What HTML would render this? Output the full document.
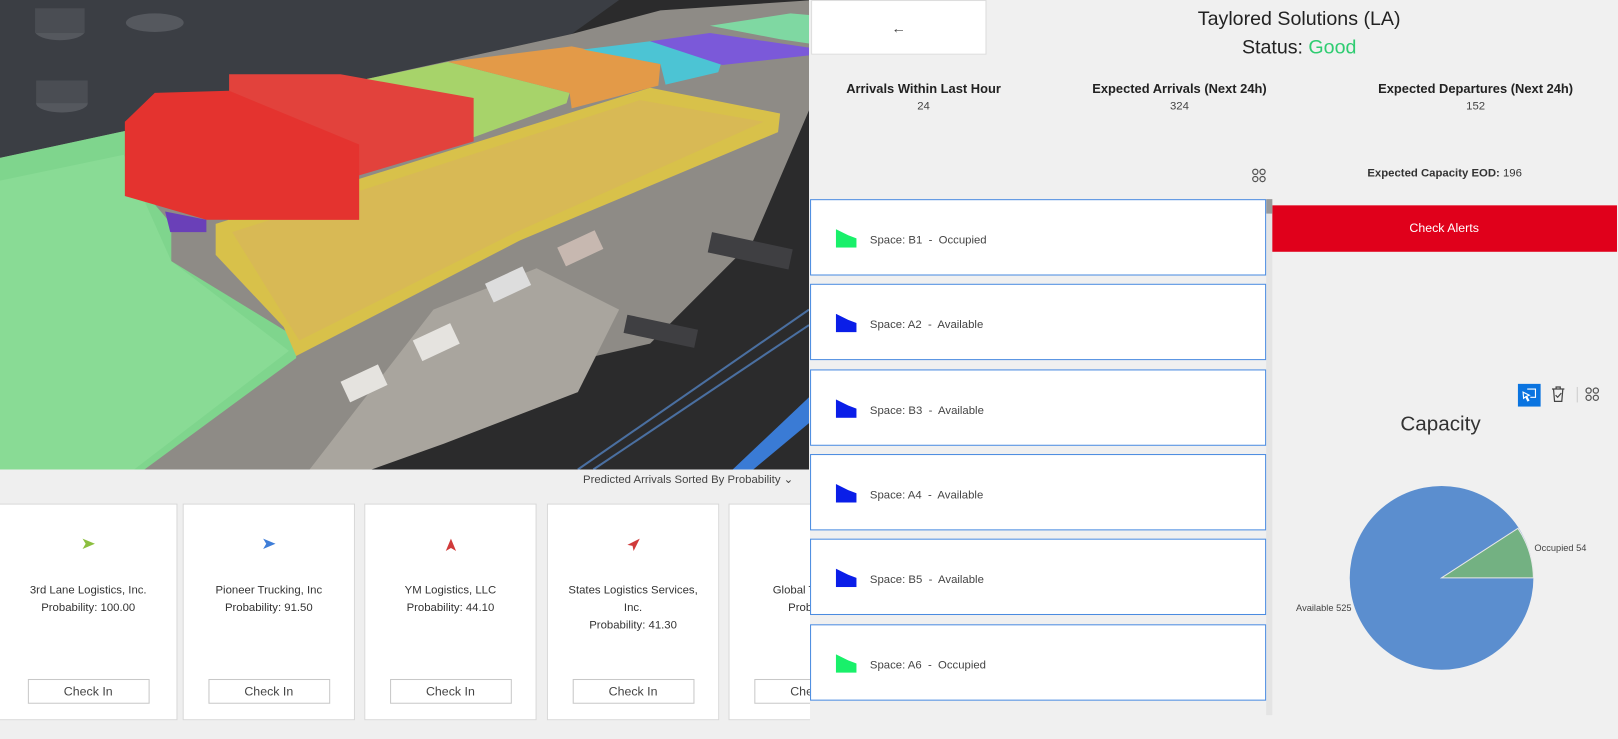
<!DOCTYPE html>
<html><head><meta charset="utf-8"><style>
*{margin:0;padding:0;box-sizing:border-box}
body{width:1618px;height:716px;overflow:hidden;background:#f0f0f0;font-family:"Liberation Sans",sans-serif;position:relative;color:#222}
#w{position:absolute;left:0;top:0;width:1568px;height:694px;transform:scale(1.0319);transform-origin:0 0}
.abs{position:absolute}
.card{position:absolute;top:488px;height:210px;background:#fff;border:1px solid #d8d8d8;text-align:center;font-size:11px;color:#333;line-height:17px}
.card .btn{position:absolute;left:50%;transform:translateX(-50%);top:169px;width:118px;height:24px;border:1px solid #c8c8c8;line-height:22px;font-size:12px;color:#444;background:#fff}
.card .ic{position:absolute;left:50%;top:32px;transform:translateX(-50%)}
.card .t{position:absolute;left:22px;right:22px;top:75px}
.sp{position:absolute;left:785px;width:442px;height:74px;background:#fff;border:1px solid #4a8be0}
.sp svg{position:absolute;left:24px;top:28px}
.sp span{position:absolute;left:57px;top:33px;font-size:11px;color:#444}
.stat{position:absolute;top:79px;text-align:center;width:260px}
.stat b{display:block;font-size:12.5px;color:#222}
.stat i{font-style:normal;font-size:11px;color:#444;display:block;margin-top:4px}
</style></head><body><div id="w">
<svg class="abs" style="left:0;top:0" width="784" height="455" viewBox="0 0 784 455" preserveAspectRatio="none">
<rect width="784" height="455" fill="#2b2b2c"/>
<polygon points="0,0 600,0 554,33 353,77 121,127 0,153" fill="#3b3e44"/>
<ellipse cx="58" cy="30" rx="24" ry="9" fill="#55585e"/><rect x="34" y="8" width="48" height="24" fill="#4a4d53"/>
<ellipse cx="150" cy="22" rx="28" ry="9" fill="#55585e"/>
<ellipse cx="60" cy="100" rx="25" ry="9" fill="#55585e"/><rect x="35" y="78" width="50" height="22" fill="#4a4d53"/>
<polygon points="0,153 121,127 353,77 554,33 640,10 790,0 790,93 730,233 630,333 480,367 353,455 0,455" fill="#8e8b86"/>
<polygon points="420,300 520,260 600,300 560,380 430,430 360,455 300,455" fill="#a9a59e"/>
<rect x="470" y="275" width="40" height="20" fill="#ddd" transform="rotate(-25 470 275)"/>
<rect x="400" y="330" width="40" height="22" fill="#e5e3df" transform="rotate(-25 400 330)"/>
<rect x="330" y="370" width="40" height="22" fill="#e5e3df" transform="rotate(-25 330 370)"/>
<rect x="540" y="240" width="40" height="20" fill="#c7b8b0" transform="rotate(-25 540 240)"/>
<polygon points="0,153 121,127 126,170 166,217 166,253 287,327 287,347 140,455 0,455" fill="#7fd58d"/>
<polygon points="0,175 120,150 166,253 280,340 130,455 0,455" fill="#8fdf9b" opacity=".6"/>
<polygon points="209,217 630,85 756,110 754,128 504,233 287,345 275,317 209,247" fill="#d8c14a"/>
<polygon points="225,225 620,97 740,118 500,225 290,330" fill="#d9b55a" opacity=".7"/>
<polygon points="353,77 434,60 552,90 549,100 459,133 454,110" fill="#a7d36a"/>
<polygon points="434,60 554,45 640,62 638,83 554,105 552,90" fill="#e39a48"/>
<polygon points="565,48 630,40 700,58 696,70 645,82 640,62" fill="#4cc4d4"/>
<polygon points="630,40 688,32 790,47 790,53 700,63" fill="#7b59d9"/>
<polygon points="688,25 766,13 790,15 790,43 756,38" fill="#7fd8a2"/>
<polygon points="222,72 330,72 459,95 459,137 348,170 348,213 222,213" fill="#e2423c"/>
<polygon points="121,118 150,90 222,88 348,140 348,213 200,213 121,190" fill="#e4332f"/>
<polygon points="160,205 200,213 200,225 165,225" fill="#6a40b8"/>
<rect x="608" y="305" width="70" height="18" fill="#3f3f42" transform="rotate(12 608 305)"/>
<rect x="690" y="225" width="80" height="20" fill="#3f3f42" transform="rotate(12 690 225)"/>
<line x1="560" y1="455" x2="784" y2="300" stroke="#4a6fa0" stroke-width="2"/>
<line x1="575" y1="455" x2="784" y2="315" stroke="#4a6fa0" stroke-width="2"/>
<polygon points="710,455 784,385 784,410 730,455" fill="#3a7bd5"/>
</svg>
<div class="abs" style="left:0;top:455px;width:785px;height:261px;background:#efefef"></div>
<div class="abs" style="left:565px;top:458px;font-size:11px;color:#444">Predicted Arrivals Sorted By Probability &#8964;</div>
<div class="card" style="left:-1px;width:173px"><svg class="ic" width="14" height="12" viewBox="0 0 14 12"><path d="M1 1L13 6L1 11L4 6Z" fill="#8cbf3f"/></svg><div class="t">3rd Lane Logistics, Inc.<br>Probability: 100.00</div><div class="btn">Check In</div></div>
<div class="card" style="left:177px;width:167px"><svg class="ic" width="14" height="12" viewBox="0 0 14 12"><path d="M1 1L13 6L1 11L4 6Z" fill="#3f7ed8"/></svg><div class="t">Pioneer Trucking, Inc<br>Probability: 91.50</div><div class="btn">Check In</div></div>
<div class="card" style="left:353px;width:167px"><svg class="ic" width="12" height="14" viewBox="0 0 12 14"><path d="M6 1L11 13L6 10L1 13Z" fill="#d03a3a"/></svg><div class="t">YM Logistics, LLC<br>Probability: 44.10</div><div class="btn">Check In</div></div>
<div class="card" style="left:530px;width:167px"><svg class="ic" width="14" height="14" viewBox="0 0 14 14"><path d="M13 1L7 13L6 8L1 7Z" fill="#d03a3a"/></svg><div class="t" style="left:14px;right:14px">States Logistics Services, Inc.<br>Probability: 41.30</div><div class="btn">Check In</div></div>
<div class="card" style="left:706px;width:167px"><div class="t">Global Transport<br>Probability</div><div class="btn">Check In</div></div>
<div class="abs" style="left:785px;top:0;width:833px;height:716px;background:#f0f0f0"></div>
<div class="abs" style="left:786px;top:0;width:170px;height:53px;background:#fff;border:1px solid #ddd;text-align:center;line-height:52px;font-size:14px;color:#444">&#8592;</div>
<div class="abs" style="left:1000px;top:6px;width:518px;text-align:center;font-size:19px;color:#222;line-height:26px">Taylored Solutions (LA)</div>
<div class="abs" style="left:1000px;top:34px;width:518px;text-align:center;font-size:19px;color:#222;line-height:26px">Status: <span style="color:#2ecc71">Good</span></div>
<div class="stat" style="left:765px"><b>Arrivals Within Last Hour</b><i>24</i></div>
<div class="stat" style="left:1013px"><b>Expected Arrivals (Next 24h)</b><i>324</i></div>
<div class="stat" style="left:1300px"><b>Expected Departures (Next 24h)</b><i>152</i></div>
<svg class="abs" style="left:1213px;top:163px" width="14" height="14" viewBox="0 0 14 14" fill="none" stroke="#555" stroke-width="1.2"><circle cx="3.5" cy="3.5" r="2.5"/><circle cx="10.5" cy="3.5" r="2.5"/><circle cx="3.5" cy="10.5" r="2.5"/><circle cx="10.5" cy="10.5" r="2.5"/></svg>
<div class="abs" style="left:1300px;top:162px;width:200px;text-align:center;font-size:11px;color:#333"><b>Expected Capacity EOD:</b> 196</div>
<div class="abs" style="left:1232px;top:199px;width:335px;height:45px;background:#e0001b;color:#fff;font-size:12px;text-align:center;line-height:45px">Check Alerts</div>
<div class="abs" style="left:1227px;top:193px;width:6px;height:500px;background:#e4e4e4"></div>
<div class="abs" style="left:1227px;top:193px;width:6px;height:14px;background:#999"></div>
<div class="sp" style="top:193px"><svg width="20" height="18"><path d="M0 0L12 6L20 9V18H0Z" fill="#19f06a"/></svg><span>Space: B1 &nbsp;-&nbsp; Occupied</span></div>
<div class="sp" style="top:275px"><svg width="20" height="18"><path d="M0 0L12 6L20 9V18H0Z" fill="#0a1ee8"/></svg><span>Space: A2 &nbsp;-&nbsp; Available</span></div>
<div class="sp" style="top:358px"><svg width="20" height="18"><path d="M0 0L12 6L20 9V18H0Z" fill="#0a1ee8"/></svg><span>Space: B3 &nbsp;-&nbsp; Available</span></div>
<div class="sp" style="top:440px"><svg width="20" height="18"><path d="M0 0L12 6L20 9V18H0Z" fill="#0a1ee8"/></svg><span>Space: A4 &nbsp;-&nbsp; Available</span></div>
<div class="sp" style="top:522px"><svg width="20" height="18"><path d="M0 0L12 6L20 9V18H0Z" fill="#0a1ee8"/></svg><span>Space: B5 &nbsp;-&nbsp; Available</span></div>
<div class="sp" style="top:605px"><svg width="20" height="18"><path d="M0 0L12 6L20 9V18H0Z" fill="#19f06a"/></svg><span>Space: A6 &nbsp;-&nbsp; Occupied</span></div>
<div class="abs" style="left:1471px;top:372px;width:22px;height:22px;background:#0a74e0"></div>
<svg class="abs" style="left:1474px;top:375px" width="16" height="16" viewBox="0 0 16 16" fill="none" stroke="#fff" stroke-width="1.1"><path d="M6 2H14V10H9"/><path d="M2 5L8 8L5.5 9L7.5 13L6.5 13.5L4.5 9.5L2.5 11Z"/></svg>
<svg class="abs" style="left:1503px;top:374px" width="14" height="16" viewBox="0 0 14 16" fill="none" stroke="#444" stroke-width="1.2"><path d="M1 3H13M5 3V1H9V3M2.5 3L3.5 15H10.5L11.5 3M4.5 9L6.5 11L10 7"/></svg>
<div class="abs" style="left:1528px;top:375px;width:1px;height:15px;background:#ccc"></div>
<svg class="abs" style="left:1536px;top:375px" width="14" height="14" viewBox="0 0 14 14" fill="none" stroke="#555" stroke-width="1.2"><circle cx="3.5" cy="3.5" r="2.5"/><circle cx="10.5" cy="3.5" r="2.5"/><circle cx="3.5" cy="10.5" r="2.5"/><circle cx="10.5" cy="10.5" r="2.5"/></svg>
<div class="abs" style="left:1296px;top:400px;width:200px;text-align:center;font-size:20px;color:#333">Capacity</div>
<svg class="abs" style="left:1240px;top:470px" width="370" height="210">
<circle cx="157" cy="90" r="89" fill="#5b8ecf"/>
<path d="M157 90L231 42A89 89 0 0 1 246 90Z" fill="#73b182" stroke="#e8e8e8" stroke-width="1"/>
<text x="247" y="64" font-size="9" fill="#444" font-family="Liberation Sans">Occupied 54</text>
<text x="16" y="122" font-size="9" fill="#444" font-family="Liberation Sans">Available 525</text>
</svg>
</div></body></html>
